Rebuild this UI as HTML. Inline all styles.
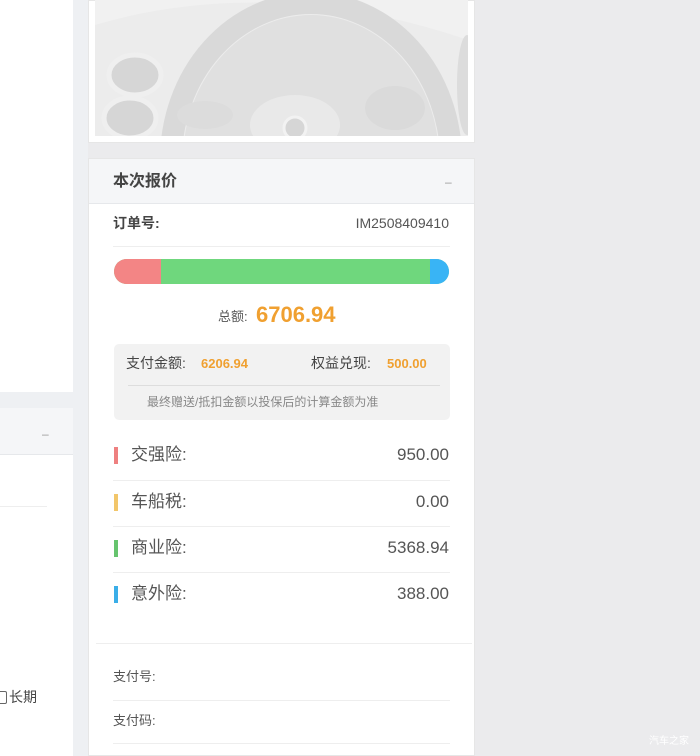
<!DOCTYPE html>
<html><head><meta charset="utf-8"><style>
*{margin:0;padding:0;box-sizing:border-box}
body{width:700px;height:756px;background:#ebebed;position:relative;overflow:hidden;font-family:"Liberation Sans","Noto Sans CJK SC",sans-serif;color:#555}
.abs{position:absolute}
.t{position:absolute;white-space:nowrap;line-height:1}
</style></head><body>
<div class="abs" style="left:0;top:0;width:74px;height:756px;background:#eef0f3"></div>
<div class="abs" style="left:0;top:0;width:73px;height:392px;background:#fff"></div>
<div class="abs" style="left:0;top:408px;width:73px;height:348px;background:#fff"></div>
<div class="abs" style="left:0;top:408px;width:73px;height:47px;background:#f5f6f8;border-bottom:1px solid #e6e8eb"></div>
<div class="t" style="left:42px;top:428px;color:#999;font-size:12px">–</div>
<div class="abs" style="left:0;top:506px;width:47px;height:1px;background:#eee"></div>
<div class="abs" style="left:-4px;top:691px;width:11px;height:13px;border:1px solid #666;border-radius:2px"></div>
<div class="t" style="left:9px;top:690px;font-size:14px;color:#444">长期</div>
<div class="abs" style="left:74px;top:0;width:14px;height:756px;background:#eef0f3"></div>
<div class="abs" style="left:88px;top:0;width:387px;height:143px;background:#fff;border:1px solid #e6e6e6"></div>
<svg class="abs" style="left:95px;top:0" width="373" height="136" viewBox="0 0 373 136">
<rect width="373" height="136" fill="#ececec"/>
<path d="M0 0 H373 V40 Q300 15 220 5 Q100 -5 0 25Z" fill="#f1f1f1"/>
<ellipse cx="216" cy="160" rx="140" ry="157" fill="none" stroke="#d9d9d9" stroke-width="22"/>
<ellipse cx="216" cy="160" rx="128" ry="145" fill="#e0e0e0"/>
<ellipse cx="40" cy="75" rx="26" ry="20" fill="#d6d6d6" stroke="#efefef" stroke-width="5"/>
<ellipse cx="35" cy="118" rx="26" ry="20" fill="#d6d6d6" stroke="#efefef" stroke-width="5"/>
<ellipse cx="200" cy="125" rx="45" ry="30" fill="#e9e9e9"/>
<circle cx="200" cy="128" r="11" fill="#d6d6d6" stroke="#f2f2f2" stroke-width="3"/>
<ellipse cx="300" cy="108" rx="30" ry="22" fill="#dadada"/>
<ellipse cx="110" cy="115" rx="28" ry="14" fill="#dcdcdc"/>
<ellipse cx="372" cy="85" rx="10" ry="50" fill="#dcdcdc"/>
</svg>
<div class="abs" style="left:88px;top:158px;width:387px;height:598px;background:#fff;border:1px solid #e6e6e6"></div>
<div class="abs" style="left:89px;top:159px;width:385px;height:45px;background:#f5f6f8;border-bottom:1px solid #e6e8eb"></div>
<div class="t" style="left:113px;top:174px;font-size:16px;font-weight:bold;color:#444">本次报价</div>
<div class="t" style="left:445px;top:176px;font-size:12px;color:#999">–</div>
<div class="t" style="left:113px;top:216px;font-size:14px;font-weight:bold;color:#444">订单号:</div>
<div class="t" style="right:251px;top:216px;font-size:14px;color:#555">IM2508409410</div>
<div class="abs" style="left:113px;top:246px;width:337px;height:1px;background:#eee"></div>
<div class="abs" style="left:114px;top:259px;width:335px;height:25px;border-radius:13px;overflow:hidden;background:#6fd77d">
 <div class="abs" style="left:0;top:0;width:47px;height:25px;background:#f38585"></div>
 <div class="abs" style="left:316px;top:0;width:19px;height:25px;background:#39b4f5"></div>
</div>
<div class="t" style="left:218px;top:310px;font-size:13px;color:#555">总额:</div>
<div class="t" style="left:256px;top:304px;font-size:22px;font-weight:bold;color:#f0a030">6706.94</div>
<div class="abs" style="left:114px;top:344px;width:336px;height:76px;background:#f2f2f2;border-radius:5px"></div>
<div class="t" style="left:126px;top:356px;font-size:14px;color:#444">支付金额:</div>
<div class="t" style="left:201px;top:357px;font-size:13px;font-weight:bold;color:#f0a030">6206.94</div>
<div class="t" style="left:311px;top:356px;font-size:14px;color:#444">权益兑现:</div>
<div class="t" style="left:387px;top:357px;font-size:13px;font-weight:bold;color:#f0a030">500.00</div>
<div class="abs" style="left:128px;top:385px;width:312px;height:1px;background:#ddd"></div>
<div class="t" style="left:147px;top:396px;font-size:12px;color:#888">最终赠送/抵扣金额以投保后的计算金额为准</div>
<div class="abs" style="left:114px;top:447px;width:4px;height:17px;background:#ee8080"></div>
<div class="t" style="left:131px;top:446px;font-size:17px;color:#555">交强险:</div>
<div class="t" style="right:251px;top:446px;font-size:17px;color:#555">950.00</div>
<div class="abs" style="left:113px;top:480px;width:337px;height:1px;background:#eee"></div>
<div class="abs" style="left:114px;top:494px;width:4px;height:17px;background:#f2c66a"></div>
<div class="t" style="left:131px;top:493px;font-size:17px;color:#555">车船税:</div>
<div class="t" style="right:251px;top:493px;font-size:17px;color:#555">0.00</div>
<div class="abs" style="left:113px;top:526px;width:337px;height:1px;background:#eee"></div>
<div class="abs" style="left:114px;top:540px;width:4px;height:17px;background:#66c46e"></div>
<div class="t" style="left:131px;top:539px;font-size:17px;color:#555">商业险:</div>
<div class="t" style="right:251px;top:539px;font-size:17px;color:#555">5368.94</div>
<div class="abs" style="left:113px;top:572px;width:337px;height:1px;background:#eee"></div>
<div class="abs" style="left:114px;top:586px;width:4px;height:17px;background:#3aaee8"></div>
<div class="t" style="left:131px;top:585px;font-size:17px;color:#555">意外险:</div>
<div class="t" style="right:251px;top:585px;font-size:17px;color:#555">388.00</div>
<div class="abs" style="left:96px;top:643px;width:376px;height:1px;background:#eee"></div>
<div class="t" style="left:113px;top:670px;font-size:13px;color:#555">支付号:</div>
<div class="abs" style="left:113px;top:700px;width:337px;height:1px;background:#eee"></div>
<div class="t" style="left:113px;top:714px;font-size:13px;color:#555">支付码:</div>
<div class="abs" style="left:113px;top:743px;width:337px;height:1px;background:#eee"></div>
<div class="t" style="left:649px;top:737px;font-size:10px;color:#fff">汽车之家</div>
</body></html>
